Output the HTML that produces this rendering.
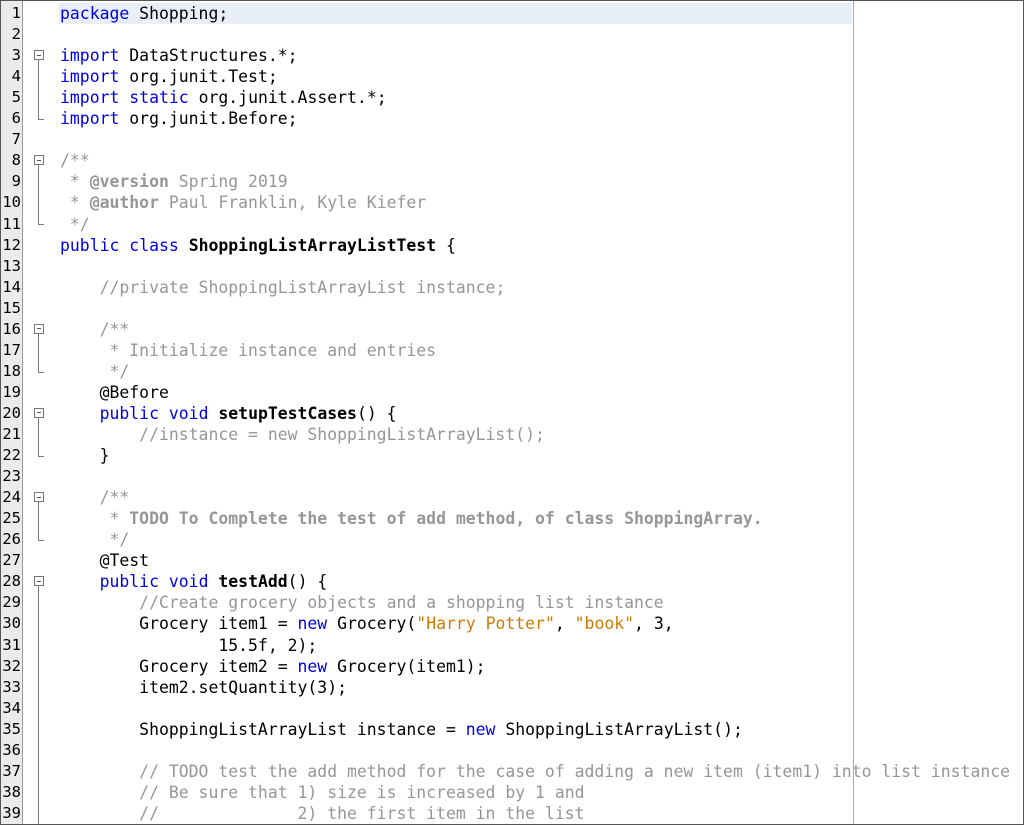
<!DOCTYPE html>
<html><head><meta charset="utf-8"><style>
body{margin:0;width:1024px;height:825px;overflow:hidden;background:#fff;font-family:"DejaVu Sans Mono","Liberation Mono",monospace;}
#wrap{position:absolute;left:0;top:0;width:1022px;height:823px;border:1px solid #555;overflow:hidden;background:#fff}
#gut{position:absolute;left:0;top:0;width:21px;height:825px;background:#ebebeb;border-right:1px solid #9a9a9a}
.n{position:absolute;left:0;width:20px;text-align:right;font-size:15.5px;color:#000;line-height:21px}
.l{position:absolute;left:59px;white-space:pre;font-size:16.45px;line-height:21px;color:#000}
.k{color:#0000e6}.c{color:#969696}.s{color:#ce7b00}.b{font-weight:bold}.t{color:#969696;font-weight:bold}
#hl{position:absolute;left:58px;top:2px;width:793px;height:21px;background:#e9eff8}
#red{position:absolute;left:852px;top:0;width:1px;height:825px;background:#f08a8a}
.fb{position:absolute;left:33px;width:10px;height:10px;border:1px solid #777;background:#fff;box-sizing:border-box}
.fb:after{content:"";position:absolute;left:2px;top:3.5px;width:4px;height:1px;background:#555}
.fl{position:absolute;left:37px;width:5px;border-left:1px solid #777;border-bottom:1px solid #777}
</style></head><body><div id="wrap">
<div id="gut"></div><div id="hl"></div><div id="red"></div>
<div id="code"></div>
</div>
<script>
var L=[
'<span class="k">package</span> Shopping;','',
'<span class="k">import</span> DataStructures.*;',
'<span class="k">import</span> org.junit.Test;',
'<span class="k">import</span> <span class="k">static</span> org.junit.Assert.*;',
'<span class="k">import</span> org.junit.Before;','',
'<span class="c">/**</span>',
'<span class="c"> * </span><span class="t">@version</span><span class="c"> Spring 2019</span>',
'<span class="c"> * </span><span class="t">@author</span><span class="c"> Paul Franklin, Kyle Kiefer</span>',
'<span class="c"> */</span>',
'<span class="k">public</span> <span class="k">class</span> <span class="b">ShoppingListArrayListTest</span> {','',
'    <span class="c">//private ShoppingListArrayList instance;</span>','',
'    <span class="c">/**</span>',
'<span class="c">     * Initialize instance and entries</span>',
'<span class="c">     */</span>',
'    @Before',
'    <span class="k">public</span> <span class="k">void</span> <span class="b">setupTestCases</span>() {',
'        <span class="c">//instance = new ShoppingListArrayList();</span>',
'    }','',
'    <span class="c">/**</span>',
'<span class="c">     * </span><span class="t">TODO To Complete the test of add method, of class ShoppingArray.</span>',
'<span class="c">     */</span>',
'    @Test',
'    <span class="k">public</span> <span class="k">void</span> <span class="b">testAdd</span>() {',
'        <span class="c">//Create grocery objects and a shopping list instance</span>',
'        Grocery item1 = <span class="k">new</span> Grocery(<span class="s">"Harry Potter"</span>, <span class="s">"book"</span>, 3,',
'                15.5f, 2);',
'        Grocery item2 = <span class="k">new</span> Grocery(item1);',
'        item2.setQuantity(3);','',
'        ShoppingListArrayList instance = <span class="k">new</span> ShoppingListArrayList();','',
'        <span class="c">// TODO test the add method for the case of adding a new item (item1) into list instance</span>',
'        <span class="c">// Be sure that 1) size is increased by 1 and</span>',
'        <span class="c">//              2) the first item in the list</span>'];
var h='',lh=21.05;
for(var i=0;i<L.length;i++){var y=2+i*lh;
h+='<div class="n" style="top:'+y+'px">'+(i+1)+'</div><div class="l" style="top:'+y+'px">'+L[i]+'</div>';}
[[3,6],[8,11],[16,18],[20,22],[24,26],[28,40]].forEach(function(f){
var y=2+(f[0]-1)*lh+5;h+='<div class="fb" style="top:'+y+'px"></div>';
var e=2+(f[1]-1)*lh+11;h+='<div class="fl" style="top:'+(y+10)+'px;height:'+(e-y-10)+'px"></div>';});
document.getElementById('code').innerHTML=h;
</script></body></html>
